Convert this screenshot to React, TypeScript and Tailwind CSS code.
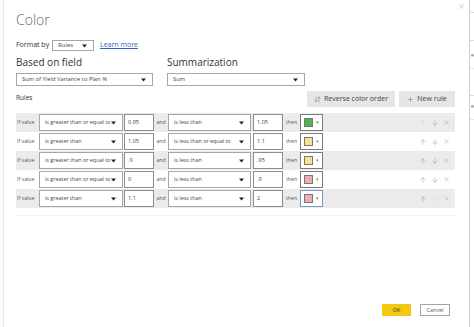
import React from 'react';
import { ArrowUp, ArrowDown, X, ArrowDownUp, Plus } from 'lucide-react';

interface Rule {
    op1: string;
    v1: string;
    op2: string;
    v2: string;
    color: string;
    focused?: boolean;
}

const rules: Rule[] = [
    { op1: 'is greater than or equal to', v1: '0.95', op2: 'is less than', v2: '1.05', color: '#4db54f' },
    { op1: 'is greater than', v1: '1.05', op2: 'is less than or equal to', v2: '1.1', color: '#f4e38d' },
    { op1: 'is greater than or equal to', v1: '.9', op2: 'is less than', v2: '.95', color: '#f4e38d' },
    { op1: 'is greater than or equal to', v1: '0', op2: 'is less than', v2: '.9', color: '#f2aab5' },
    { op1: 'is greater than', v1: '1.1', op2: 'is less than', v2: '2', color: '#f2aab5', focused: true },
];

function Caret({ className = '' }: { className?: string }) {
    return (
        <svg width="5" height="4" viewBox="0 0 5 4" className={className}>
            <path d="M0 0.5 L5 0.5 L2.5 3.5 Z" fill="#222" />
        </svg>
    );
}

function Select({ label, width, height, text }: { label: string; width: string; height: string; text: string }) {
    return (
        <div className={`flex items-center justify-between bg-white border border-[#a6a6a6] pl-[5px] pr-[6px] ${width} ${height}`}>
            <span className={`${text} text-[#444] whitespace-nowrap`}>{label}</span>
            <Caret />
        </div>
    );
}

export default function App() {
    return (
        <div
            className="flex w-[474px] h-[327px] bg-white overflow-hidden"
            style={{ fontFamily: '"Open Sans", "Noto Sans", sans-serif' }}
        >
            {/* Left edge of the page behind */}
            <div className="w-[4px] h-full bg-white border-r border-[#e6e6e6]" />

            {/* Dialog */}
            <div className="relative flex flex-col w-[465px] h-full pl-[12px] pr-[14px]">
                <X className="absolute top-[3px] right-[4px] w-[7px] h-[7px] text-[#888]" strokeWidth={1.5} />

                <div className="mt-[11px] h-[17px] text-[14px] leading-[17px] font-light text-[#6b6b6b]">Color</div>

                {/* Format by */}
                <div className="mt-[12px] flex items-center h-[11px]">
                    <span className="text-[7px] text-[#333] w-[36px]">Format by</span>
                    <Select label="Rules" width="w-[42px]" height="h-[11px]" text="text-[6px]" />
                    <span className="ml-[6px] text-[7px] text-[#3560c4] underline">Learn more</span>
                </div>

                {/* Based on field / Summarization */}
                <div className="mt-[6px] flex h-[11px] text-[10px] leading-[11px] text-[#333]">
                    <span className="w-[151px]">Based on field</span>
                    <span>Summarization</span>
                </div>
                <div className="mt-[5px] flex h-[13px]">
                    <Select label="Sum of Yield Variance to Plan %" width="w-[137px]" height="h-[13px]" text="text-[5.8px]" />
                    <div className="w-[14px]" />
                    <Select label="Sum" width="w-[138px]" height="h-[13px]" text="text-[5.8px]" />
                </div>

                {/* Rules header */}
                <div className="mt-[5px] flex h-[16px]">
                    <span className="pt-[2px] text-[6.5px] text-[#333]">Rules</span>
                    <div className="flex-1" />
                    <div className="flex items-center justify-center gap-[3px] w-[88px] h-[16px] bg-[#e6e6e6] text-[7px] text-[#444]">
                        <ArrowDownUp className="w-[7px] h-[7px]" strokeWidth={1.2} />
                        Reverse color order
                    </div>
                    <div className="ml-[4px] flex items-center justify-center gap-[3px] w-[56px] h-[16px] bg-[#e6e6e6] text-[7px] text-[#444]">
                        <Plus className="w-[7px] h-[7px]" strokeWidth={1.2} />
                        New rule
                    </div>
                </div>

                {/* Rules list */}
                <div className="mt-[6px] flex flex-col">
                    {rules.map((r, i) => (
                        <div
                            key={i}
                            className={`flex items-center h-[19px] ${i % 2 === 0 ? 'bg-[#ebebeb]' : 'bg-white'}`}
                        >
                            <span className="w-[23px] pl-[1px] text-[5.2px] text-[#555] whitespace-nowrap">If value</span>
                            <Select label={r.op1} width="w-[84px]" height="h-[17px]" text="text-[5.4px]" />
                            <div className="ml-[1px] w-[30px] h-[17px] bg-white border border-[#8c8c8c] pl-[3px] flex items-center text-[5.6px] text-[#444]">
                                {r.v1}
                            </div>
                            <span className="w-[14px] text-center text-[5.2px] text-[#555]">and</span>
                            <Select label={r.op2} width="w-[83px]" height="h-[17px]" text="text-[5.4px]" />
                            <div className="ml-[2px] w-[30px] h-[17px] bg-white border border-[#8c8c8c] pl-[3px] flex items-center text-[5.6px] text-[#444]">
                                {r.v2}
                            </div>
                            <span className="w-[17px] text-center text-[5.2px] text-[#555]">then</span>
                            <div
                                className={`flex items-center w-[23px] h-[17px] bg-white border ${r.focused ? 'border-[#7d95cf]' : 'border-[#7a7a7a]'} pl-[3px]`}
                            >
                                <div className="w-[9px] h-[9px] border border-[#777]" style={{ backgroundColor: r.color }} />
                                <span className="ml-[3px] text-[5px] text-[#888]">▾</span>
                            </div>
                            <div className="flex-1" />
                            <div className="flex items-center gap-[4px] pr-[5px]">
                                <ArrowUp
                                    className={`w-[8px] h-[8px] ${i === 0 ? 'text-[#d4d4d4]' : 'text-[#8a8a8a]'}`}
                                    strokeWidth={1.3}
                                />
                                <ArrowDown
                                    className={`w-[8px] h-[8px] ${i === rules.length - 1 ? 'text-[#d4d4d4]' : 'text-[#8a8a8a]'}`}
                                    strokeWidth={1.3}
                                />
                                <X className="w-[7px] h-[7px] text-[#8a8a8a]" strokeWidth={1.3} />
                            </div>
                        </div>
                    ))}
                </div>
                <div className="mt-[7px] h-px bg-[#f2f2f2]" />

                {/* Footer */}
                <div className="mt-auto mb-[11px] flex justify-end gap-[9px] pr-[5px]">
                    <div className="w-[29px] h-[12px] bg-[#f2c811] flex items-center justify-center text-[5.5px] text-[#333]">
                        OK
                    </div>
                    <div className="w-[30px] h-[12px] bg-white border border-[#a6a6a6] flex items-center justify-center text-[5.5px] text-[#555]">
                        Cancel
                    </div>
                </div>
            </div>

            {/* Right pane behind the dialog */}
            <div className="flex-1 h-full border-l border-[#cfcfcf] flex flex-col">
                <div className="mt-[12px] h-px bg-[#dcdcdc]" />
                <div className="mt-[27px] h-px bg-[#dcdcdc]" />
                <div className="mt-[12px] pl-[1px] text-[5px] leading-[5px] text-[#555]">e</div>
                <div className="mt-[10px] h-px bg-[#e6e6e6]" />
                <div className="mt-[26px] h-px bg-[#dcdcdc]" />
                <div className="mt-[8px] pl-[1px] text-[5px] leading-[5px] text-[#555]">e</div>
                <div className="mt-[10px] h-px bg-[#e6e6e6]" />
            </div>
        </div>
    );
}
